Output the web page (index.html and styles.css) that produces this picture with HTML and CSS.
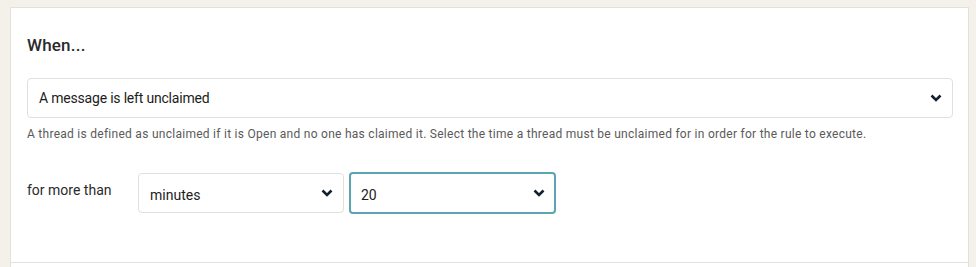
FILE: index.html
```html
<!DOCTYPE html>
<html>
<head>
<meta charset="utf-8">
<link rel="stylesheet" href="styles.css">
</head>
<body>
<div class="card">
  <div class="section">
    <h2 class="title">When...</h2>
    <div class="select wide">
      <span>A message is left unclaimed</span>
      <svg class="chev" width="12" height="8" viewBox="0 0 12 8"><polyline points="1.5,1.5 6,6 10.5,1.5" fill="none" stroke="#14202e" stroke-width="2.6"/></svg>
    </div>
    <p class="help">A thread is defined as unclaimed if it is Open and no one has claimed it. Select the time a thread must be unclaimed for in order for the rule to execute.</p>
    <div class="row">
      <div class="label">for more than</div>
      <div class="select half">
        <span>minutes</span>
        <svg class="chev" width="12" height="8" viewBox="0 0 12 8"><polyline points="1.5,1.5 6,6 10.5,1.5" fill="none" stroke="#14202e" stroke-width="2.6"/></svg>
      </div>
      <div class="select half focus">
        <span>20</span>
        <svg class="chev" width="12" height="8" viewBox="0 0 12 8"><polyline points="1.5,1.5 6,6 10.5,1.5" fill="none" stroke="#14202e" stroke-width="2.6"/></svg>
      </div>
    </div>
  </div>
  <div class="section next"></div>
</div>
</body>
</html>
```
FILE: styles.css
```css
html, body {
  margin: 0;
  padding: 0;
  background: #f4f0ea;
  font-family: Roboto, "Liberation Sans", sans-serif;
  color: #222;
}
.card {
  margin: 7px 7px 0 10px;
  background: #fff;
  border: 1px solid #e5e1da;
  border-bottom: none;
  height: 260px;
}
.section {
  padding: 25px 16px 0 16px;
  height: 229px;
  border-bottom: 1px solid #e5e1da;
}
.title {
  margin: 0;
  font-size: 17px;
  font-weight: 500;
  line-height: 24px;
  color: #2a2a2a;
  letter-spacing: 0.2px;
}
.select {
  box-sizing: border-box;
  display: flex;
  align-items: center;
  justify-content: space-between;
  border: 1px solid #e3e0da;
  border-radius: 4px;
  background: #fff;
  font-size: 14px;
  color: #1c1c1c;
  padding: 0 10px 0 11px;
}
.wide {
  margin-top: 21px;
  height: 40px;
  width: 926px;
}
.wide span {
  letter-spacing: -0.2px;
}
.help {
  margin: 8px 0 0 0;
  font-size: 12px;
  line-height: 16px;
  color: #5a5a5a;
  letter-spacing: 0.27px;
}
.row {
  display: flex;
  align-items: flex-start;
  margin-top: 30px;
  gap: 5px;
}
.label {
  width: 106px;
  font-size: 14px;
  line-height: 20px;
  padding-top: 8px;
  color: #2a2a2a;
}
.half {
  width: 206px;
  height: 40px;
  margin-top: 1px;
}
.half span {
  padding-top: 3px;
}
.focus {
  border: 2px solid #5aa4b4;
  height: 42px;
  width: 207px;
  margin-top: 0;
  padding-left: 10px;
  padding-right: 9px;
}
.chev {
  display: block;
}
.next {
  border-bottom: none;
  height: 5px;
  padding: 0;
}
```
